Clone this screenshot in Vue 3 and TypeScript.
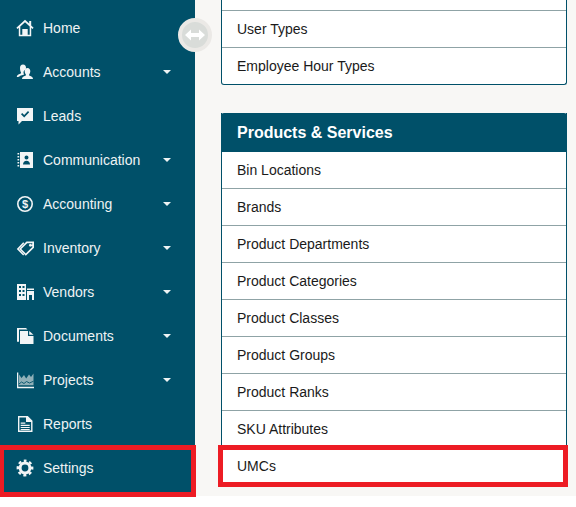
<script setup lang="ts">
interface NavItem { label: string; icon: string; caret?: boolean; marked?: boolean }

const nav: NavItem[] = [
  { label: 'Home', icon: 'home' },
  { label: 'Accounts', icon: 'accounts', caret: true },
  { label: 'Leads', icon: 'leads' },
  { label: 'Communication', icon: 'communication', caret: true },
  { label: 'Accounting', icon: 'accounting', caret: true },
  { label: 'Inventory', icon: 'inventory', caret: true },
  { label: 'Vendors', icon: 'vendors', caret: true },
  { label: 'Documents', icon: 'documents', caret: true },
  { label: 'Projects', icon: 'projects', caret: true },
  { label: 'Reports', icon: 'reports' },
  { label: 'Settings', icon: 'settings', marked: true },
]

const products: string[] = [
  'Bin Locations', 'Brands', 'Product Departments', 'Product Categories', 'Product Classes',
  'Product Groups', 'Product Ranks', 'SKU Attributes', 'UMCs',
]
</script>

<template>
  <div class="page">
    <aside class="sidebar">
      <a v-for="item in nav" :key="item.label" class="nav-item" :class="{ marked: item.marked }">
        <svg class="icon" viewBox="0 0 18 18" aria-hidden="true">
          <template v-if="item.icon === 'home'">
            <path fill-rule="evenodd" d="M9 .8.4 8.800l1.100 1.200L2.800 8.800V17.200h12.400V8.800l1.300 1.200 1.100-1.200L15.200 6.400V2h-2v2.600zM9 3.200l4.700 4.300v8.200h-2V10H6.300v5.700h-2V7.500z" />
            <path d="M7.300 11h3.400v1H7.300z" />
          </template>
          <template v-else-if="item.icon === 'accounts'">
            <path d="M7 1.500c2 0 3 1.500 3 3.300 0 .6-.1 1.100-.3 1.600-1.300.4-2.200 1.600-2.200 3.100 0 .8.2 1.500.7 2-.6.3-3.600 1-4.200 1.400-.9.500-1.600 1.100-2.500 1.100H.8c0-1.700 1.400-2.700 3.400-3.200.8-.3 1-.8.7-1.600C4.400 8.500 4 6.800 4 4.800 4 3 5 1.500 7 1.500z" />
            <path d="M11.500 5c1.800 0 2.800 1.400 2.800 3.100 0 1.400-.5 2.600-1.100 3.300-.3.500-.2 1 .5 1.300 1.900.6 3.300 1.400 3.300 3.300H6c0-1.900 1.400-2.700 3.300-3.300.7-.3.8-.8.5-1.300-.6-.7-1.100-1.900-1.100-3.300C8.700 6.400 9.700 5 11.500 5z" />
          </template>
          <path v-else-if="item.icon === 'leads'" fill-rule="evenodd" d="M1 1h16v13H6l-3.500 3.500V14H1zM5 7.200 6.200 6l2 2 3.800-4 1.200 1.200-5 5.200z" />
          <template v-else-if="item.icon === 'communication'">
            <path fill-rule="evenodd" d="M4 1h13v16H4zM10.500 4.500a2 2 0 1 0 0 4 2 2 0 0 0 0-4zM7 13.500h7c0-2.200-1.500-3.700-3.500-3.700S7 11.300 7 13.500z" />
            <path d="M1.500 2h1.700v1.500H1.500zM1.500 5h1.700v1.500H1.500zM1.500 8h1.700v1.500H1.500zM1.500 11h1.700v1.500H1.500zM1.500 14h1.700v1.500H1.500z" />
          </template>
          <template v-else-if="item.icon === 'accounting'">
            <circle cx="9" cy="9" r="7.200" fill="none" stroke="currentColor" stroke-width="1.600" />
            <text x="9" y="13" text-anchor="middle" class="dollar">$</text>
          </template>
          <template v-else-if="item.icon === 'inventory'">
            <path fill-rule="evenodd" d="M10.500 2.500h7.500v6.300L9.800 16.800 3 10zM11.200 4.200 5.300 10l4.500 4.500 6.500-6.400V7.300l-1.200-.1a1.300 1.300 0 1 1 .1-1.800l1.100-.2V4.200z" />
            <path d="M7.200 3.200 8.300 4.300 2.900 10l5.300 5.400-1 1L.8 10z" />
          </template>
          <template v-else-if="item.icon === 'vendors'">
            <path fill-rule="evenodd" d="M1 1h9v16H1zM3 3v2h2V3zM6.500 3v2h2V3zM3 7v2h2V7zM6.500 7v2h2V7zM3 11v2h2v-2zM6.500 11v2h2v-2z" />
            <path fill-rule="evenodd" d="M11 5.500h7V7h-7zM11 8h7v9h-2v-5h-3v5h-2z" />
          </template>
          <template v-else-if="item.icon === 'documents'">
            <path d="M1 1h9l1.500 1.500H3v12.300H1z" />
            <path d="M4 4h8v5h5.500v8H4z" />
            <path d="M13.200 4 17.500 7.800h-4.300z" />
          </template>
          <template v-else-if="item.icon === 'projects'">
            <path class="chart" d="M3 3.500l2.500 3.500L8 4l2.200 3.500L13 3.500l2 2.500 2.500-3.500V14.300H3z" />
            <path fill="none" stroke="#005069" stroke-width=".9" d="M3 13l2.500-2 2.500 1.500 2.500-2 3 1.500 4-1.800" />
            <path d="M1 1.500h1.300v14.300H18v1.400H1z" />
          </template>
          <template v-else-if="item.icon === 'reports'">
            <path fill-rule="evenodd" d="M2 1h9.800L16.500 5.700V17H2zM3.400 2.400v13.200h11.700V7H10V2.400z" />
            <path d="M11.300 2.600 15 6h-3.700zM4.700 7.600h4.600v1.100H4.700zM4.700 9.800h9v1.100h-9zM4.700 12h9v1.100h-9zM4.700 14h9v.9h-9z" />
          </template>
          <template v-else-if="item.icon === 'settings'">
            <circle cx="9" cy="9" r="4.900" fill="none" stroke="currentColor" stroke-width="3" />
            <circle cx="9" cy="9" r="7.200" fill="none" stroke="currentColor" stroke-width="2.400" stroke-dasharray="3 2.655" stroke-dashoffset="1.500" transform="rotate(-90 9 9)" />
          </template>
        </svg>
        <span class="nav-label">{{ item.label }}</span>
        <span v-if="item.caret" class="caret"></span>
      </a>
    </aside>

    <button class="toggle" type="button" aria-label="Toggle sidebar">
      <svg viewBox="0 0 20 12" width="20" height="12" aria-hidden="true">
        <path d="M0 6l6-5.500V4h8V.5L20 6l-6 5.500V8H6v3.500z" />
      </svg>
    </button>

    <main class="content">
      <section class="card">
        <div class="row cut"></div>
        <div class="row">User Types</div>
        <div class="row">Employee Hour Types</div>
      </section>

      <section class="card">
        <h2 class="card-title">Products &amp; Services</h2>
        <div v-for="name in products" :key="name" class="row" :class="{ marked: name === 'UMCs' }">{{ name }}</div>
      </section>
    </main>
  </div>
</template>

<style>
html, body { margin: 0; background: #fff; }
</style>

<style scoped>
.page {
  position: relative;
  display: grid;
  grid-template-columns: 195px 1fr;
  align-items: start;
  width: 576px;
  height: 507px;
  overflow: hidden;
  font-family: "Liberation Sans", Arial, sans-serif;
  font-size: 14px;
}
.sidebar {
  display: flex;
  flex-direction: column;
  height: 497px;
  box-sizing: border-box;
  padding-top: 6px;
  background: #005069;
}
.nav-item {
  position: relative;
  display: flex;
  align-items: center;
  height: 44px;
  flex: none;
  padding: 0 24px 0 16px;
  color: #eef3f4;
}
.nav-item.marked::after {
  content: "";
  position: absolute;
  left: 0;
  right: -1px;
  top: -1px;
  bottom: -7px;
  border: solid #ed1c24;
  border-width: 5px 5px 5px 4px;
}
.icon {
  width: 18px;
  height: 18px;
  flex: none;
  margin-right: 9px;
  fill: currentColor;
  color: #f2f5f6;
}
.chart { fill: #8fb0b8; }
.dollar {
  font-family: "Liberation Sans", Arial, sans-serif;
  font-size: 11px;
  font-weight: 700;
  fill: currentColor;
}
.caret {
  width: 0;
  height: 0;
  margin-left: auto;
  border-top: 4px solid #eef3f4;
  border-left: 4px solid transparent;
  border-right: 4px solid transparent;
}
.toggle {
  position: absolute;
  left: 178px;
  top: 18px;
  display: flex;
  align-items: center;
  justify-content: center;
  width: 34px;
  height: 34px;
  padding: 0;
  border: 4px solid #ebe9e6;
  border-radius: 50%;
  background: #d9dcd9;
  box-sizing: border-box;
}
.toggle svg { fill: #fff; }
.content {
  height: 496px;
  box-sizing: border-box;
  padding: 0 9px 0 26px;
  background: #f8f7f5;
}
.card {
  margin-bottom: 28px;
  background: #fff;
  border: solid #005069;
  border-width: 0 1px 1px;
  border-radius: 0 0 3px 3px;
}
.card-title {
  height: 39px;
  margin: 0 -1px;
  padding: 0 16px;
  border-radius: 3px 3px 0 0;
  background: #005069;
  color: #fff;
  font-size: 16px;
  font-weight: 700;
  line-height: 39px;
}
.row {
  position: relative;
  height: 36px;
  padding: 0 15px;
  border-bottom: 1px solid #8fa3a6;
  color: #1a1a1a;
  line-height: 36px;
}
.row:last-child { border-bottom: 0; }
.row.cut { height: 10px; }
.row.marked::after {
  content: "";
  position: absolute;
  left: -4px;
  right: -2px;
  top: -3px;
  bottom: -3px;
  border: 5px solid #ed1c24;
}
</style>
